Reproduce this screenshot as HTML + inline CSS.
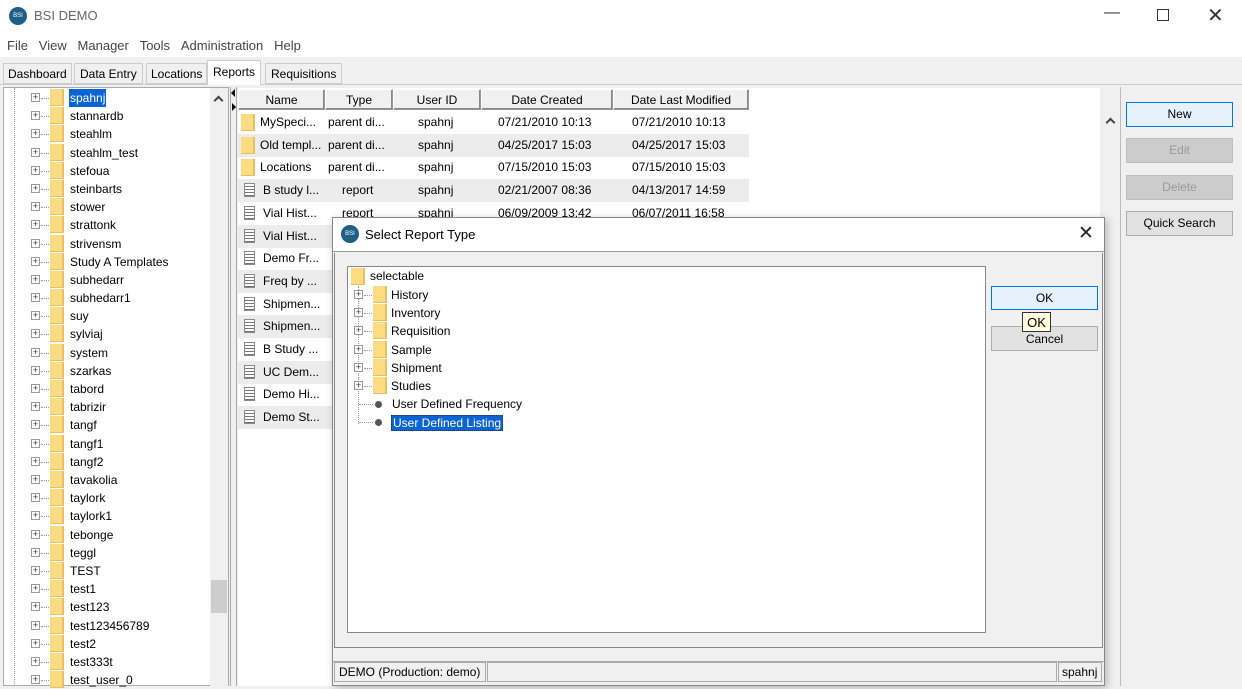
<!DOCTYPE html>
<html><head><style>
*{margin:0;padding:0;box-sizing:border-box}
body{width:1242px;height:686px;overflow:hidden;background:#f0f0f0;font-family:"Liberation Sans",Tahoma,sans-serif;font-size:12px;color:#000;position:relative}
.a{position:absolute;white-space:nowrap}
.pl{position:absolute;width:9px;height:9px;border:1px solid #999;background:#fff;font-size:9px;line-height:7px;text-align:center;color:#333}
.fd{position:absolute;width:14px;height:17px;background:#fcdc82;border-right:2px solid #e8c060;border-bottom:1px solid #e8c060}
.tr{position:absolute;left:0;width:210px;height:18px;line-height:18px}
.rw{position:absolute;left:238px;width:511px;height:23px;line-height:23px}
.hd{position:absolute;top:89px;height:21px;line-height:20px;text-align:center;background:#f0f0f0;border:1px solid #999;border-top-color:#fff;border-left-color:#fff;box-shadow:inset -1px -1px 0 #888}
.btn{position:absolute;text-align:center;border:1px solid #adadad;background:#e1e1e1;line-height:22px}
.doc{position:absolute;width:11px;height:14px;border:1px solid #888;background:repeating-linear-gradient(#fff 0 2px,#777 2px 3px)}
.up{position:absolute;width:7px;height:7px;border-left:2px solid #444;border-top:2px solid #444;transform:rotate(45deg)}
</style></head><body>
<div class="a" style="left:0;top:0;width:1242px;height:33px;background:#fff"></div>
<div class="a" style="left:9px;top:7px;width:18px;height:18px;border-radius:50%;background:#1e5f87;color:#fff;font-size:6px;line-height:18px;text-align:center">BSI</div>
<div class="a" style="left:34px;top:8px;font-size:13px;color:#666">BSI DEMO</div>
<div class="a" style="left:1104px;top:4px;font-size:16px;color:#333">&#8212;</div>
<div class="a" style="left:1157px;top:9px;width:12px;height:12px;border:1px solid #333"></div>
<div class="a" style="left:1207px;top:3px;font-size:20px;color:#333">&#10005;</div>
<div class="a" style="left:0;top:33px;width:1242px;height:24px;background:#fff"></div>
<div class="a" style="left:7px;top:38px;font-size:13px;color:#444">File&nbsp;&nbsp;&nbsp;View&nbsp;&nbsp;&nbsp;Manager&nbsp;&nbsp;&nbsp;Tools&nbsp;&nbsp;&nbsp;Administration&nbsp;&nbsp;&nbsp;Help</div>
<div class="a" style="left:0;top:84px;width:1242px;height:1px;background:#ccc"></div>
<div class="a" style="left:3px;top:63px;height:21px;line-height:20px;padding:0 4px;border:1px solid #ccc;background:#f0f0f0">Dashboard</div>
<div class="a" style="left:74px;top:63px;height:21px;line-height:20px;padding:0 5px;border:1px solid #ccc;background:#f0f0f0">Data Entry</div>
<div class="a" style="left:146px;top:63px;height:21px;line-height:20px;padding:0 4px;border:1px solid #ccc;background:#f0f0f0">Locations</div>
<div class="a" style="left:207px;top:60px;height:25px;line-height:22px;padding:0 5px;border:1px solid #ccc;border-bottom:none;background:#fff">Reports</div>
<div class="a" style="left:265px;top:63px;height:21px;line-height:20px;padding:0 5px;border:1px solid #ccc;background:#f0f0f0">Requisitions</div>
<div class="a" style="left:3px;top:87px;width:226px;height:599px;background:#fff;border:1px solid #aaa"></div>
<div class="a" style="left:14px;top:88px;height:598px;border-left:1px dotted #999"></div>
<div class="a" style="left:210px;top:88px;width:18px;height:598px;background:#f0f0f0"></div>
<div class="up" style="left:215px;top:97px"></div>
<div class="a" style="left:211px;top:580px;width:16px;height:33px;background:#cdcdcd"></div>
<div id="tree"></div>
<div class="a" style="left:230px;top:87px;width:7px;height:599px;background:#f0f0f0;border-left:1px solid #aaa;border-right:1px solid #aaa"></div>
<div class="a" style="left:231px;top:89px;width:0;height:0;border:4px solid transparent;border-right-color:#000;border-left:none"></div>
<div class="a" style="left:232px;top:103px;width:0;height:0;border:4px solid transparent;border-left-color:#000;border-right:none"></div>
<div class="a" style="left:238px;top:88px;width:862px;height:598px;background:#fff"></div>
<div class="a" style="left:1100px;top:88px;width:20px;height:598px;background:#f0f0f0"></div>
<div class="up" style="left:1107px;top:119px"></div>
<div class="a" style="left:1120px;top:87px;width:1px;height:599px;background:#bbb"></div>
<div class="hd" style="left:238px;width:87px">Name</div>
<div class="hd" style="left:325px;width:68px">Type</div>
<div class="hd" style="left:393px;width:88px">User ID</div>
<div class="hd" style="left:481px;width:132px">Date Created</div>
<div class="hd" style="left:613px;width:136px">Date Last Modified</div>
<div id="tbl"></div>
<div class="btn" style="left:1126px;top:102px;width:107px;height:25px;background:#e5f1fb;border-color:#0078d7">New</div>
<div class="btn" style="left:1126px;top:138px;width:107px;height:25px;background:#ccc;border-color:#bfbfbf;color:#999">Edit</div>
<div class="btn" style="left:1126px;top:175px;width:107px;height:25px;background:#ccc;border-color:#bfbfbf;color:#999">Delete</div>
<div class="btn" style="left:1126px;top:211px;width:107px;height:25px">Quick Search</div>
<div class="a" style="left:332px;top:217px;width:773px;height:469px;background:#f0f0f0;border:1px solid #888;box-shadow:2px 2px 8px rgba(0,0,0,.25)"></div>
<div class="a" style="left:333px;top:218px;width:771px;height:34px;background:#fff;border-bottom:1px solid #999"></div>
<div class="a" style="left:341px;top:225px;width:18px;height:18px;border-radius:50%;background:#1e5f87;color:#fff;font-size:6px;line-height:18px;text-align:center">BSI</div>
<div class="a" style="left:365px;top:227px;font-size:13px">Select Report Type</div>
<div class="a" style="left:1078px;top:222px;font-size:19px;color:#222">&#10005;</div>
<div class="a" style="left:334px;top:253px;width:769px;height:395px;border:1px solid #888;border-top:none"></div>
<div class="a" style="left:347px;top:266px;width:639px;height:367px;background:#fff;border:1px solid #888"></div>
<div class="fd" style="left:351px;top:268px"></div>
<div class="a" style="left:370px;top:269px">selectable</div>
<div class="a" style="left:358px;top:286px;height:138px;border-left:1px dotted #999"></div>
<div id="dtree"></div>
<div class="a" style="left:391px;top:415px;height:16px;line-height:15px;padding:0 1px;background:#0a64d2;color:#fff;border:1px dotted #333">User Defined Listing</div>
<div class="btn" style="left:991px;top:286px;width:107px;height:24px;background:#e5f1fb;border-color:#0078d7">OK</div>
<div class="btn" style="left:991px;top:326px;width:107px;height:25px;line-height:24px">Cancel</div>
<div class="a" style="left:1022px;top:312px;width:29px;height:20px;background:#ffffe1;border:1px solid #333;text-align:center;line-height:19px;font-size:13px">OK</div>
<div class="a" style="left:333px;top:661px;width:771px;height:22px;border-top:1px solid #aaa"></div>
<div class="a" style="left:334px;top:662px;width:152px;height:20px;line-height:19px;padding-left:4px;border:1px solid #aaa">DEMO (Production: demo)</div>
<div class="a" style="left:487px;top:662px;width:570px;height:20px;border:1px solid #aaa"></div>
<div class="a" style="left:1058px;top:662px;width:44px;height:20px;line-height:19px;padding-left:3px;border:1px solid #aaa">spahnj</div>
<script>
var n=["spahnj","stannardb","steahlm","steahlm_test","stefoua","steinbarts","stower","strattonk","strivensm","Study A Templates","subhedarr","subhedarr1","suy","sylviaj","system","szarkas","tabord","tabrizir","tangf","tangf1","tangf2","tavakolia","taylork","taylork1","tebonge","teggl","TEST","test1","test123","test123456789","test2","test333t","test_user_0"],h="";
n.forEach(function(s,i){var y=89+i*18.19;
h+='<div class="pl" style="left:31px;top:'+(y+4)+'px">+</div><div class="a" style="left:41px;top:'+(y+9)+'px;width:8px;border-top:1px dotted #999"></div><div class="fd" style="left:50px;top:'+y+'px"></div>';
h+='<div class="a" style="left:69px;top:'+y+'px;height:18px;line-height:18px;padding:0 1px;'+(i==0?'background:#0a64d2;color:#fff':'')+'">'+s+'</div>';});
document.getElementById('tree').innerHTML=h;
var r=[["MySpeci...","parent di...","07/21/2010 10:13","07/21/2010 10:13",1],["Old templ...","parent di...","04/25/2017 15:03","04/25/2017 15:03",1],["Locations","parent di...","07/15/2010 15:03","07/15/2010 15:03",1],["B study l...","report","02/21/2007 08:36","04/13/2017 14:59",0],["Vial Hist...","report","06/09/2009 13:42","06/07/2011 16:58",0],["Vial Hist..."],["Demo Fr..."],["Freq by ..."],["Shipmen..."],["Shipmen..."],["B Study ..."],["UC Dem..."],["Demo Hi..."],["Demo St..."]];h="";
r.forEach(function(a,i){var y=111+i*22.7;
h+='<div class="rw" style="top:'+y+'px;'+(i%2?'background:#ececec;':'')+'"></div>';
if(a[4]===1)h+='<div class="fd" style="left:241px;top:'+(y+3)+'px"></div><div class="a" style="left:260px;top:'+(y+4)+'px">'+a[0]+'</div>';
else h+='<div class="doc" style="left:244px;top:'+(y+4)+'px"></div><div class="a" style="left:263px;top:'+(y+4)+'px">'+a[0]+'</div>';
if(a.length>1){var x=a[4]?328:342;h+='<div class="a" style="left:'+x+'px;top:'+(y+4)+'px">'+a[1]+'</div><div class="a" style="left:418px;top:'+(y+4)+'px">spahnj</div><div class="a" style="left:498px;top:'+(y+4)+'px">'+a[2]+'</div><div class="a" style="left:632px;top:'+(y+4)+'px">'+a[3]+'</div>';}});
document.getElementById('tbl').innerHTML=h;
var d=["History","Inventory","Requisition","Sample","Shipment","Studies"];h="";
d.forEach(function(s,i){var y=286+i*18.2;
h+='<div class="pl" style="left:354px;top:'+(y+4)+'px">+</div><div class="a" style="left:364px;top:'+(y+9)+'px;width:8px;border-top:1px dotted #999"></div><div class="fd" style="left:373px;top:'+y+'px"></div><div class="a" style="left:391px;top:'+(y+2)+'px">'+s+'</div>';});
[["User Defined Frequency",404],["User Defined Listing",422]].forEach(function(a,i){
h+='<div class="a" style="left:359px;top:'+a[1]+'px;width:14px;border-top:1px dotted #999"></div><div class="a" style="left:375px;top:'+(a[1]-3)+'px;width:7px;height:7px;border-radius:50%;background:#555"></div>';
if(i==0)h+='<div class="a" style="left:392px;top:'+(a[1]-7)+'px">'+a[0]+'</div>';});
document.getElementById('dtree').innerHTML=h;
</script>
</body></html>
